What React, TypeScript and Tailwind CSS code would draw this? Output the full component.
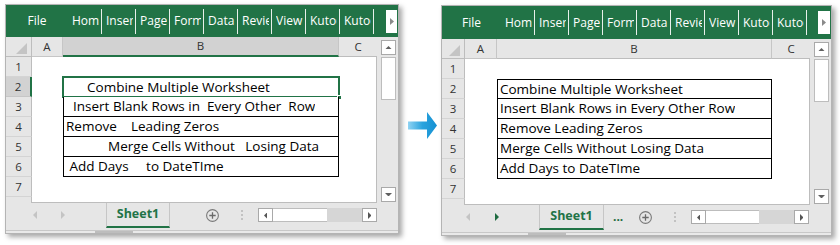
type Variant = 'before' | 'after'

const layout = {
  before: {
    win: 'ml-[5px] mt-[4px] w-[394px]',
    ribbon: 'h-[32px]',
    file: 'w-[62px]',
    ribbonGap: 'w-[12px]',
    ribbonBtn: 'w-[11px]',
    head: 'w-[26px]',
    colA: 'w-[31px]',
    colB: 'w-[276px]',
    nav: 'w-[100px] pl-[27px] gap-[24px]',
    tab: 'w-[64px]',
    hscroll: 'w-[119px]',
    thumb: 'w-[54px]',
    strip: 'ml-[89px]',
  },
  after: {
    win: 'ml-[4px] mt-[5px] w-[391px]',
    ribbon: 'h-[33px]',
    file: 'w-[59px]',
    ribbonGap: 'w-[11px]',
    ribbonBtn: 'w-[12px]',
    head: 'w-[23px]',
    colA: 'w-[32px]',
    colB: 'w-[275px]',
    nav: 'w-[97px] pl-[24px] gap-[25px]',
    tab: 'w-[65px]',
    hscroll: 'w-[118px]',
    thumb: 'w-[53px]',
    strip: 'ml-[86px]',
  },
}

const ribbonTabs = ['Home', 'Insert', 'Page Layout', 'Formulas', 'Data', 'Review', 'View', 'Kutools', 'Kutools Plus']

const beforeRows = [
  '      Combine Multiple Worksheet',
  '  Insert Blank Rows in  Every Other  Row',
  'Remove    Leading Zeros',
  '            Merge Cells Without   Losing Data',
  ' Add Days     to DateTIme',
]

const afterRows = [
  'Combine Multiple Worksheet',
  'Insert Blank Rows in Every Other Row',
  'Remove Leading Zeros',
  'Merge Cells Without Losing Data',
  'Add Days to DateTIme',
]

export default function App() {
  return (
    <div className="flex h-[245px] w-[840px] items-start bg-white font-['Open_Sans',sans-serif]">
      <ExcelWindow variant="before" />
      <div className="ml-[9px] mt-[112px]">
        <BlueArrow />
      </div>
      <ExcelWindow variant="after" />
    </div>
  )
}

// ─── Window ───────────────────────────────────────────────────────────────────

function ExcelWindow({ variant }: { variant: Variant }) {
  const L = layout[variant]
  const rows = variant === 'before' ? beforeRows : afterRows
  const selected = variant === 'before'

  return (
    <div
      className={`flex flex-col border border-[#b4b4b4] bg-[#e6e6e6] shadow-[3px_3px_5px_rgba(0,0,0,0.35)] ${L.win}`}
    >
      {/* ribbon */}
      <div className={`flex items-center bg-[#217346] text-[12px] text-white ${L.ribbon}`}>
        <div className={`text-center ${L.file}`}>File</div>
        {ribbonTabs.map((t) => (
          <div key={t} className="flex items-center">
            <div className="ml-[4px] mr-[2px] w-[27px] overflow-hidden whitespace-nowrap">{t}</div>
            <div className="h-[25px] w-px bg-[#e8f0eb]" />
          </div>
        ))}
        <div className={L.ribbonGap} />
        <div className={`flex h-[23px] items-center justify-center bg-white ${L.ribbonBtn}`}>
          <svg width="4" height="7" viewBox="0 0 4 7">
            <path d="M0 0 L4 3.5 L0 7 Z" fill="#8a8a8a" />
          </svg>
        </div>
      </div>

      {/* sheet */}
      <div className="flex">
        <div className="flex flex-col">
          {/* column headers */}
          <div className="flex h-[20px] text-[11.5px] text-[#333]">
            <div className={`relative border-r border-b border-[#bdbdbd] ${L.head}`}>
              <svg className="absolute right-[4px] bottom-[2px]" width="11" height="11" viewBox="0 0 11 11">
                <path d="M11 0 L11 11 L0 11 Z" fill="#c4c4c4" />
              </svg>
            </div>
            <div className={`flex items-center justify-center border-r border-b border-[#c6c6c6] ${L.colA}`}>A</div>
            <div
              className={`flex items-center justify-center border-r border-[#c6c6c6] ${L.colB} ${
                selected ? 'border-b-2 border-b-[#217346] bg-[#d2d2d2]' : 'border-b border-b-[#bdbdbd]'
              }`}
            >
              B
            </div>
            <div className="flex w-[38px] justify-center overflow-hidden border-b border-[#bdbdbd]">
              <div className="flex w-[64px] shrink-0 items-center justify-center">C</div>
            </div>
          </div>

          {/* rows */}
          {[1, 2, 3, 4, 5, 6, 7].map((n) => {
            const text = n >= 2 && n <= 6 ? rows[n - 2] : null
            const isSel = selected && n === 2
            return (
              <div key={n} className="flex h-[20px]">
                <div
                  className={`flex items-center justify-center border-b text-[11.5px] ${L.head} ${
                    isSel
                      ? 'border-r-2 border-r-[#217346] border-b-[#c6c6c6] bg-[#d2d2d2] text-[#333]'
                      : 'border-r border-r-[#bdbdbd] border-b-[#d4d4d4] text-[#333]'
                  }`}
                >
                  {n}
                </div>
                <div className={`bg-white ${L.colA}`} />
                <div
                  className={`relative flex items-center bg-white ${L.colB} ${
                    text !== null ? 'border-x border-b border-black' : ''
                  } ${n === 2 ? 'border-t' : ''}`}
                >
                  {text !== null && (
                    <span className="overflow-hidden whitespace-pre pl-[2px] pt-px text-[13.5px] leading-none text-black">
                      {text}
                    </span>
                  )}
                  {isSel && (
                    <>
                      <div className="absolute -inset-[2px] border-2 border-[#217346]" />
                      <div className="absolute -right-[4px] -bottom-[4px] h-[5px] w-[5px] border border-white bg-[#217346]" />
                    </>
                  )}
                </div>
                <div className="w-[38px] border-r border-[#bdbdbd] bg-white" />
              </div>
            )
          })}
          <div className="flex h-[6px]">
            <div className={`border-r border-[#bdbdbd] ${L.head}`} />
            <div className={`border-b border-[#bdbdbd] bg-white ${L.colA}`} />
            <div className={`border-b border-[#bdbdbd] bg-white ${L.colB}`} />
            <div className="w-[38px] border-r border-b border-[#bdbdbd] bg-white" />
          </div>
        </div>

        <VerticalScroll />
      </div>

      {/* sheet tabs */}
      <div className="flex h-[27px] items-center pb-[3px]">
        <div className={`flex items-center ${L.nav}`}>
          <Tri dir="left" color="#c4c4c4" />
          <Tri dir="right" color={variant === 'after' ? '#1e6b40' : '#c4c4c4'} />
        </div>
        <div
          className={`flex h-[25px] items-center justify-center self-start border-x border-b-2 border-x-[#c6c6c6] border-b-[#217346] text-[12.5px] font-bold text-[#217346] ${L.tab}`}
        >
          Sheet1
        </div>
        {variant === 'after' ? (
          <div className="w-[35px] pl-[9px] text-[12px] font-bold leading-none text-[#1e6b40]">...</div>
        ) : (
          <div className="w-[36px]" />
        )}
        <svg width="13" height="13" viewBox="0 0 13 13">
          <circle cx="6.5" cy="6.5" r="5.9" fill="none" stroke="#7a7a7a" strokeWidth="1.1" />
          <path d="M6.5 3.3 V9.7 M3.3 6.5 H9.7" stroke="#6a6a6a" strokeWidth="1.3" />
        </svg>
        <div className="w-[22px]" />
        <div className="flex flex-col gap-[2px]">
          <div className="h-[2px] w-[2px] bg-[#c2c2c2]" />
          <div className="h-[2px] w-[2px] bg-[#c2c2c2]" />
          <div className="h-[2px] w-[2px] bg-[#c2c2c2]" />
        </div>
        <div className="w-[15px]" />
        <div className={`flex h-[14px] ${L.hscroll}`}>
          <ScrollBtn dir="left" />
          <div className={`border-y border-[#bdbdbd] bg-white ${L.thumb}`} />
          <div className="flex-1 bg-[#d6d6d6]" />
          <ScrollBtn dir="right" />
        </div>
      </div>

      {/* bottom strip */}
      <div className="flex h-[3px] border-t border-[#c8c8c8] bg-[#e9e9e9]">
        <div className={`h-[2px] w-[38px] bg-[#bdbdbd] ${L.strip}`} />
      </div>
    </div>
  )
}

function VerticalScroll() {
  return (
    <div className="flex w-[21px] flex-col pl-[4px]">
      <div className="mt-[3px] flex h-[15px] w-[15px] items-center justify-center border border-[#a9a9a9] bg-white">
        <Tri dir="up" color="#606060" small />
      </div>
      <div className="mt-[2px] h-[43px] w-[15px] border border-[#bdbdbd] bg-white" />
      <div className="mt-auto mb-[1px] flex h-[15px] w-[15px] items-center justify-center border border-[#a9a9a9] bg-white">
        <Tri dir="down" color="#606060" small />
      </div>
    </div>
  )
}

function ScrollBtn({ dir }: { dir: 'left' | 'right' }) {
  return (
    <div className="flex w-[15px] items-center justify-center border border-[#a9a9a9] bg-white">
      <Tri dir={dir} color="#555" small />
    </div>
  )
}

function Tri({
  dir,
  color,
  small,
}: {
  dir: 'left' | 'right' | 'up' | 'down'
  color: string
  small?: boolean
}) {
  const s = small ? 3.5 : 4
  const l = small ? 7 : 8
  if (dir === 'left' || dir === 'right') {
    const d = dir === 'left' ? `M${s} 0 L0 ${l / 2} L${s} ${l} Z` : `M0 0 L${s} ${l / 2} L0 ${l} Z`
    return (
      <svg width={s} height={l} viewBox={`0 0 ${s} ${l}`}>
        <path d={d} fill={color} />
      </svg>
    )
  }
  const d = dir === 'up' ? `M0 ${s} L${l / 2} 0 L${l} ${s} Z` : `M0 0 L${l / 2} ${s} L${l} 0 Z`
  return (
    <svg width={l} height={s} viewBox={`0 0 ${l} ${s}`}>
      <path d={d} fill={color} />
    </svg>
  )
}

function BlueArrow() {
  return (
    <svg width="29" height="27" viewBox="0 0 29 27">
      <defs>
        <linearGradient id="arrowGrad" x1="0" x2="1" y1="0" y2="0">
          <stop offset="0" stopColor="#8fd3f3" />
          <stop offset="0.5" stopColor="#2aa3de" />
          <stop offset="1" stopColor="#1590d2" />
        </linearGradient>
      </defs>
      <path d="M0 9.5 H19 V0 L29 13.5 L19 27 V17.5 H0 Z" fill="url(#arrowGrad)" />
    </svg>
  )
}
